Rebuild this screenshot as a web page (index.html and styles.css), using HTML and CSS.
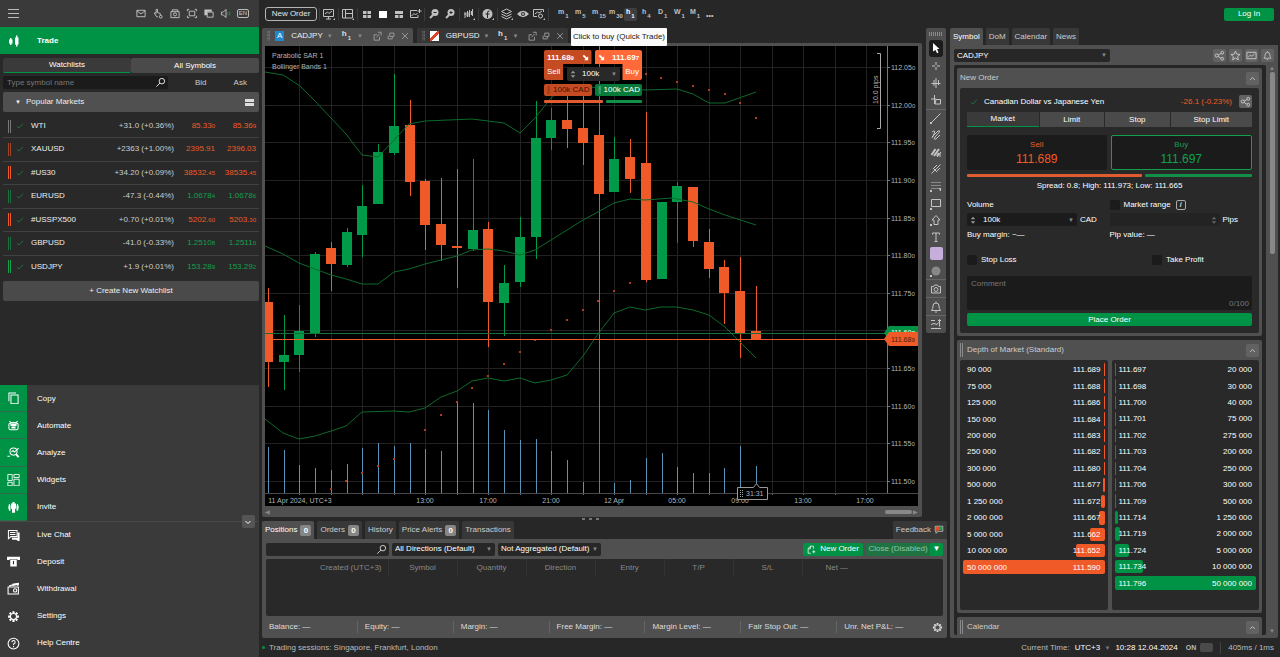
FILE: index.html
```html
<!DOCTYPE html>
<html lang="en">

<head>
    <meta charset="UTF-8">
    <meta name="viewport" content="width=device-width, initial-scale=1.0">
    <title>CADJPY - Trade</title>
    <link rel="stylesheet" href="styles.css">
</head>

<body>
    <svg class="sprite" width="0" height="0">
        <symbol id="i-mail" viewBox="0 0 12 12"><path d="M1.5 2.5h9v7h-9zM1.5 3l4.500 3.500L10.500 3" /></symbol>
        <symbol id="i-touch" viewBox="0 0 12 12"><path d="M4 6V1.500h1.500V5l3 1v2M4 5L2 5.500 4 9l2 1" /><circle cx="9" cy="9.500" r="1.500" /></symbol>
        <symbol id="i-cam" viewBox="0 0 12 12"><path d="M1.500 4h9v6.500h-9zM3 4V2h6v2" /><circle cx="6" cy="7" r="1.700" /></symbol>
        <symbol id="i-full" viewBox="0 0 12 12"><path d="M3 3.500h6v5H3zM1 3.500V1.500h2M9 1.500h2v2M11 8.500v2H9M3 10.500H1v-2" /></symbol>
        <symbol id="i-wins" viewBox="0 0 12 12"><path class="f" d="M1 1.500h8V4H4v4H1z" /><path d="M4 4.500h6.500v5.500H4z" /></symbol>
        <symbol id="i-sound" viewBox="0 0 12 12"><path d="M1 4.500h2l3-3v9l-3-3H1z" /><path class="g" d="M8 4.500v3M10 4v4" /></symbol>
        <symbol id="i-candles" viewBox="0 0 12 12"><path class="f" d="M1 4.500h1V3h1.500v1.500h1v4h-1V10H2V8.500H1zM7 2.500h1V.5h1.500v2h1v7h-1v2H8v-2H7z" /></symbol>
        <symbol id="i-search" viewBox="0 0 12 12"><circle cx="7.500" cy="4.500" r="3" /><path d="M5.500 6.500L1.500 10.500" /></symbol>
        <symbol id="i-check" viewBox="0 0 12 12"><path class="g" d="M1.500 6.500l3 2.500 6-6.500" /></symbol>
        <symbol id="i-copy" viewBox="0 0 12 12"><path d="M3.500 3h7v8.500h-7zM1.500 9V1h7" /></symbol>
        <symbol id="i-robot" viewBox="0 0 12 12"><path d="M2 2l1.500 1.500h5L10 2M1.500 5C2 3.500 10 3.500 10.500 5v4q0 1.500-1.500 1.500H3q-1.500 0-1.500-1.500z" /><path class="b" d="M3 6h6M4 8.300h4" /></symbol>
        <symbol id="i-analyze" viewBox="0 0 12 12"><circle cx="6" cy="5.500" r="3.500" /><path class="b" d="M8.500 8l2.500 3" /><path d="M0 10h2.500M4 6l1.500-1.500L7 6l4-4" /></symbol>
        <symbol id="i-widgets" viewBox="0 0 14 14"><path d="M.5.5h5v7h-5zM.5 9.500h5v4h-5zM7.500.5h6v3.500h-6zM7.500 6h6v7.500h-6z" /></symbol>
        <symbol id="i-invite" viewBox="0 0 12 12"><path class="f" d="M5 1h2v1.500h1.500v5H7.500v4h-3v-4h-1v-5H5zM1.500 3h1v1.500H3v5H1.500V8H1V4.500h.5zM9.500 3h1v1.500h.5V8h-.5v1.500H9v-5h.5z" /></symbol>
        <symbol id="i-chat" viewBox="0 0 12 12"><path d="M1 1.500h8.500v6H3.500L1 9.500zM2.500 3.500H8M2.500 5.500H8" /><path class="b" d="M11 3.500v7.500L9 9.500H4.500" /></symbol>
        <symbol id="i-deposit" viewBox="0 0 12 12"><path class="b" d="M0 2.500h12" /><path d="M.5 2v2h2M11.500 2v2h-2" /><path class="f" d="M3 4h6v6.500H3z" /><path class="k" d="M6 5.500v3" /></symbol>
        <symbol id="i-wallet" viewBox="0 0 12 12"><path d="M1 4.500h9.500V11H1zM2 3.500l8-2v2" /><path class="b" d="M5 2.500l6-1" /><circle cx="7.500" cy="7.700" r="1.500" /></symbol>
        <symbol id="i-gear" viewBox="0 0 12 12"><circle cx="6" cy="6" r="2.800" /><path class="b" d="M6 1v2M6 9v2M1 6h2M9 6h2M2.500 2.500l1.300 1.300M8.200 8.200l1.300 1.300M9.500 2.500L8.200 3.800M3.800 8.200L2.500 9.500" /></symbol>
        <symbol id="i-help" viewBox="0 0 12 12"><circle cx="6" cy="6" r="5" /><path d="M4.500 4.800q0-1.600 1.500-1.600t1.500 1.500Q7.500 5.500 6 6.500v.8M6 8.300v1" /></symbol>
        <symbol id="i-chartset" viewBox="0 0 14 14"><path d="M1.500 2.500h10v7h-10zM4 12h5M6.500 9.500V12M3 7l2.500-2L7 6.500 10 4" /><path class="f" d="M13 11v2h-2z" /></symbol>
        <symbol id="i-layout" viewBox="0 0 14 14"><path d="M1.500 2.500h10v8.500h-10zM4.500 2.500V11M4.500 6.500h7" /><path class="f" d="M13 11v2h-2z" /></symbol>
        <symbol id="i-grid" viewBox="0 0 14 14"><path class="f" d="M3 4h3.500v3H3zM7.500 4H11v3H7.500zM3 8h3.500v3H3zM7.500 8H11v3H7.500z" /></symbol>
        <symbol id="i-single" viewBox="0 0 14 14"><path class="w" d="M3 4h8v7H3z" /></symbol>
        <symbol id="i-multi" viewBox="0 0 14 14"><path class="f" d="M3 4h8v3H3zM3 8h3.500v3H3zM7.500 8H11v3H7.500z" /></symbol>
        <symbol id="i-newchart" viewBox="0 0 14 14"><path d="M9 3.500H2.500v7H10V8M3.500 9L6 6.500 7.500 8l2-2M11.500 2v4M9.500 4h4" /></symbol>
        <symbol id="i-zoomout" viewBox="0 0 14 14"><circle class="f" cx="8" cy="5.500" r="3.500" /><path class="b" d="M6 8l-3 3" /><path class="k" d="M6.500 5.500h3" /></symbol>
        <symbol id="i-zoomin" viewBox="0 0 14 14"><circle class="f" cx="8" cy="5.500" r="3.500" /><path class="b" d="M6 8l-3 3" /><path class="k" d="M6.500 5.500h3M8 4v3" /></symbol>
        <symbol id="i-ctype" viewBox="0 0 14 14"><path d="M3 5v6M2 7h2M5.500 4v6M7.500 3v7M10.500 2v7" /><path class="b" d="M5.500 5.500v4M9.800 4v4" /><path class="f" d="M13 11v2h-2z" /></symbol>
        <symbol id="i-func" viewBox="0 0 14 14"><circle class="f" cx="6.500" cy="7" r="5" /><path class="k" d="M8.500 4Q6.500 3.500 6.500 6v5M4.500 7h4" /><path class="f" d="M13 11v2h-2z" /></symbol>
        <symbol id="i-layers" viewBox="0 0 14 14"><path d="M6.500 2L11.500 4.500 6.500 7l-5-2.500zM1.500 7l5 2.500 5-2.500M1.500 9.500l5 2.500 5-2.500" /><path class="f" d="M13 11v2h-2z" /></symbol>
        <symbol id="i-eye" viewBox="0 0 14 14"><path class="f" d="M1 7q6-6.500 12 0-6 6.500-12 0z" /><circle class="kf" cx="7" cy="7" r="2" /><circle class="f" cx="7" cy="7" r="1" /></symbol>
        <symbol id="i-charteye" viewBox="0 0 14 14"><path d="M11.500 5V2.500h-10v7H5M3 7l2.500-2L7 6l3-2" /><circle cx="8.500" cy="9" r="2" /><path class="f" d="M13 11v2h-2z" /></symbol>
        <symbol id="i-cursor" viewBox="0 0 14 14"><path class="w" d="M4 2l6.500 6H8l1.500 3.500-1.500.7L6.500 9 4 10.500z" /></symbol>
        <symbol id="i-cross" viewBox="0 0 14 14"><path d="M7 3v3M7 8v3M3 7h3M8 7h3" /></symbol>
        <symbol id="i-crosschart" viewBox="0 0 14 14"><path d="M7 2v10M2.500 7.500h9M5 4v6M9.500 4v5" /></symbol>
        <symbol id="i-crossbox" viewBox="0 0 14 14"><path d="M5.500 2v9M2 6h5M7 6.500h4.500v4.500H6z" /></symbol>
        <symbol id="i-line" viewBox="0 0 14 14"><path d="M2.500 11.500l9-9" /><path class="f" d="M1 11h2v2H1z" /></symbol>
        <symbol id="i-pen" viewBox="0 0 14 14"><path d="M3 4q4-3 2 2T3 9l6-6q2-1 1.500 1L6 9q-2 3 1 2l4-4" /></symbol>
        <symbol id="i-fork" viewBox="0 0 14 14"><path class="b" d="M2.500 10l4-6M5 11l5-7M8 11l2-3" /><path d="M8 12l4-5M11 8v4" /></symbol>
        <symbol id="i-pitch" viewBox="0 0 14 14"><path d="M2.500 11.500l9-9M4 7l4-4M7 10l4-4M4.500 6.500l3 3" /></symbol>
        <symbol id="i-fib" viewBox="0 0 14 14"><path stroke-dasharray="1 1" d="M2.500 3.500h9M2.500 6.500h9M2.500 9.500h9" /><path class="f" d="M10 9h2v3h-1zM1 11h2v2H1z" /></symbol>
        <symbol id="i-rect" viewBox="0 0 14 14"><path d="M2.500 3.500h9v7h-9z" /><path class="f" d="M1 12h2v2H1z" /></symbol>
        <symbol id="i-up" viewBox="0 0 14 14"><path d="M7 2.500L11 7H9v4.500H5V7H3z" /><path class="f" d="M1 11h2v2H1z" /></symbol>
        <symbol id="i-text" viewBox="0 0 14 14"><path d="M3.500 4.500V3h7v1.500M7 3v8.500M5.500 11.500h3" /></symbol>
        <symbol id="i-dot" viewBox="0 0 14 14"><circle class="d" cx="7" cy="7" r="4.500" /><path class="d" d="M6.500 5h1v4h-1z" /><path class="f" d="M1 11h2v2H1z" /></symbol>
        <symbol id="i-camera" viewBox="0 0 14 14"><path d="M2.500 4.500h2l1-1.500h3l1 1.500h2V11h-9z" /><circle cx="7" cy="7.500" r="2" /></symbol>
        <symbol id="i-bell" viewBox="0 0 14 14"><path d="M2.500 10.500Q4 9 4 6q0-3 3-3t3 3q0 3 1.500 4.500zM6 12h2M7 1.500V3" /></symbol>
        <symbol id="i-indic" viewBox="0 0 14 14"><path d="M2 3.500h4M2 7.500l3-1 3 1 1.500-2M2 11.500h10M10.500 2.500v7M9 4l1.500-1.500L12 4" /></symbol>
        <symbol id="i-pop" viewBox="0 0 12 12"><path d="M6 4.500H2.500V11H9V7M5.500 7.500L9 3.500M7 1.500h4v4" /></symbol>
        <symbol id="i-restore" viewBox="0 0 12 12"><path d="M4.500 2.500h5v4h-5zM2.500 5.500v4h5v-3" /></symbol>
        <symbol id="i-close" viewBox="0 0 12 12"><path d="M2.500 2.500l7 7M9.500 2.500l-7 7" /></symbol>
        <symbol id="i-share" viewBox="0 0 12 12"><circle cx="3" cy="6" r="1.700" /><circle cx="9" cy="3" r="1.500" /><circle cx="9" cy="9.500" r="1.500" /><path d="M4.500 5.500L7.500 4M4.500 7l3 2" /></symbol>
        <symbol id="i-star" viewBox="0 0 12 12"><path d="M6 1.200l1.400 3.300 3.600.3-2.700 2.400.8 3.500L6 8.800l-3.100 1.900.8-3.500L1 4.800l3.600-.3z" /></symbol>
        <symbol id="i-chart" viewBox="0 0 12 12"><path d="M1 2.500h10v7H1zM2.500 7.500l2.500-2 1.500 1.500 3-3" /></symbol>
        <symbol id="i-up-chev" viewBox="0 0 12 12"><path d="M3.500 7.500L6 5l2.500 2.500" /></symbol>
        <symbol id="i-down-chev" viewBox="0 0 12 12"><path d="M3.500 5L6 7.500 8.500 5" /></symbol>
        <symbol id="i-spin" viewBox="0 0 8 12"><path class="f" d="M1 5l3-3.500L7 5zM1 7.500h6L4 11z" /></symbol>
        <symbol id="i-grip" viewBox="0 0 4 14"><path stroke-dasharray="1 1" d="M.5 0v14M2.500 0v14" /></symbol>
        <symbol id="i-order" viewBox="0 0 12 12"><path d="M4.500 1.500h4V5M1.500 5v6h3.500M1.500 5l3-3.500V5zM9 7v4M7 9h4" /></symbol>
        <symbol id="i-feedback" viewBox="0 0 12 12"><path d="M1.500 1.500h9v6H5L2.500 10V7.500h-1z" /><path class="fb-red" d="M2 2h4v5H2z" /><path class="fb-green" d="M6 2h4v4H6z" /></symbol>
        <symbol id="i-arrow" viewBox="0 0 8 8"><path class="b" d="M1.500 1.500l4 4" /><path class="f" d="M7 2.500V7H2.500z" /></symbol>
    </svg>

    <aside class="sidebar">
        <div class="sidebar-top">
            <button class="burger" aria-label="Menu"><span></span><span></span><span></span></button>
            <nav class="top-icons">
                <svg><use href="#i-mail" /></svg>
                <svg><use href="#i-touch" /></svg>
                <svg><use href="#i-cam" /></svg>
                <svg><use href="#i-full" /></svg>
                <svg><use href="#i-wins" /></svg>
                <svg><use href="#i-sound" /></svg>
                <span class="lang">EN</span>
            </nav>
        </div>
        <a class="trade" href="#"><svg><use href="#i-candles" /></svg>Trade</a>

        <section class="watch">
            <div class="watch-tabs">
                <button class="active">Watchlists</button>
                <button>All Symbols</button>
            </div>
            <div class="watch-search">
                <div class="search">
                    <input type="text" placeholder="Type symbol name" aria-label="Symbol name">
                    <svg><use href="#i-search" /></svg>
                </div>
                <span>Bid</span>
                <span>Ask</span>
            </div>
            <button class="group"><i>▼</i>Popular Markets<b class="group-icon"></b></button>
            <table class="quotes">
                <tr><td class="mark grey"></td><td class="tick"><svg><use href="#i-check" /></svg></td><td>WTI</td><td class="chg">+31.0 (+0.36%)</td><td class="red">85.33<small>0</small></td><td class="red">85.36<small>9</small></td></tr>
                <tr><td class="mark red dim"></td><td class="tick"><svg><use href="#i-check" /></svg></td><td>XAUUSD</td><td class="chg">+2363 (+1.00%)</td><td class="red">2395.91</td><td class="red">2396.03</td></tr>
                <tr><td class="mark red"></td><td class="tick"><svg><use href="#i-check" /></svg></td><td>#US30</td><td class="chg">+34.20 (+0.09%)</td><td class="red">38532.<small>45</small></td><td class="red">38535.<small>45</small></td></tr>
                <tr><td class="mark green dim"></td><td class="tick"><svg><use href="#i-check" /></svg></td><td>EURUSD</td><td class="chg">-47.3 (-0.44%)</td><td class="green">1.0678<small>4</small></td><td class="green">1.0678<small>6</small></td></tr>
                <tr><td class="mark red"></td><td class="tick"><svg><use href="#i-check" /></svg></td><td>#USSPX500</td><td class="chg">+0.70 (+0.01%)</td><td class="red">5202.<small>60</small></td><td class="red">5203.<small>30</small></td></tr>
                <tr><td class="mark green dim"></td><td class="tick"><svg><use href="#i-check" /></svg></td><td>GBPUSD</td><td class="chg">-41.0 (-0.33%)</td><td class="green">1.2510<small>8</small></td><td class="green">1.2511<small>0</small></td></tr>
                <tr><td class="mark green"></td><td class="tick"><svg><use href="#i-check" /></svg></td><td>USDJPY</td><td class="chg">+1.9 (+0.01%)</td><td class="green">153.28<small>9</small></td><td class="green">153.29<small>2</small></td></tr>
            </table>
            <button class="create">+ Create New Watchlist</button>
        </section>

        <nav class="menu">
            <a class="on" href="#"><svg><use href="#i-copy" /></svg>Copy</a>
            <a class="on" href="#"><svg><use href="#i-robot" /></svg>Automate</a>
            <a class="on" href="#"><svg><use href="#i-analyze" /></svg>Analyze</a>
            <a class="on" href="#"><svg><use href="#i-widgets" /></svg>Widgets</a>
            <a class="on" href="#"><svg><use href="#i-invite" /></svg>Invite</a>
            <a class="first" href="#"><svg><use href="#i-chat" /></svg>Live Chat</a>
            <a href="#"><svg><use href="#i-deposit" /></svg>Deposit</a>
            <a href="#"><svg><use href="#i-wallet" /></svg>Withdrawal</a>
            <a href="#"><svg><use href="#i-gear" /></svg>Settings</a>
            <a href="#"><svg><use href="#i-help" /></svg>Help Centre</a>
            <button class="fold" aria-label="Collapse"><svg><use href="#i-down-chev" /></svg></button>
        </nav>
    </aside>

    <div class="workspace">
        <header class="toolbar">
            <button class="new-order">New Order</button>
            <i class="sep"></i>
            <button class="tool" aria-label="Chart"><svg><use href="#i-chartset" /></svg></button>
            <i class="sep"></i>
            <button class="tool" aria-label="Layout"><svg><use href="#i-layout" /></svg></button>
            <i class="sep"></i>
            <button class="tool" aria-label="Grid"><svg><use href="#i-grid" /></svg></button>
            <button class="tool" aria-label="Single"><svg><use href="#i-single" /></svg></button>
            <button class="tool" aria-label="Multi"><svg><use href="#i-multi" /></svg></button>
            <button class="tool" aria-label="New chart"><svg><use href="#i-newchart" /></svg></button>
            <i class="sep"></i>
            <button class="tool" aria-label="Zoom out"><svg><use href="#i-zoomout" /></svg></button>
            <button class="tool" aria-label="Zoom in"><svg><use href="#i-zoomin" /></svg></button>
            <i class="sep"></i>
            <button class="tool" aria-label="Chart type"><svg><use href="#i-ctype" /></svg></button>
            <i class="sep"></i>
            <button class="tool" aria-label="Indicators"><svg><use href="#i-func" /></svg></button>
            <i class="sep"></i>
            <button class="tool" aria-label="Objects"><svg><use href="#i-layers" /></svg></button>
            <button class="tool" aria-label="View"><svg><use href="#i-eye" /></svg></button>
            <button class="tool" aria-label="Chart view"><svg><use href="#i-charteye" /></svg></button>
            <i class="sep"></i>
            <div class="frames">
                <button>m<sub>1</sub></button>
                <button>m<sub>5</sub></button>
                <button>m<sub>15</sub></button>
                <button>m<sub>30</sub></button>
                <button class="active">h<sub>1</sub></button>
                <button>h<sub>4</sub></button>
                <button>D<sub>1</sub></button>
                <button>W<sub>1</sub></button>
                <button>M<sub>1</sub></button>
                <button class="more">•••</button>
            </div>
            <button class="login">Log In</button>
        </header>

        <div class="main">
            <main class="center">
                <div class="charts">
                    <div class="chart-col">
                        <div class="chart-tabs">
                            <div class="chart-tab active">
                                <svg class="bar-grip"><use href="#i-grip" /></svg>
                                <span class="badge blue">A</span>
                                <span class="name">CADJPY</span><i>▼</i>
                                <span class="tf">h<sub>1</sub></span><i>▼</i>
                                <svg><use href="#i-pop" /></svg>
                                <svg class="end"><use href="#i-restore" /></svg>
                                <svg><use href="#i-close" /></svg>
                            </div>
                            <div class="chart-tab">
                                <svg class="bar-grip"><use href="#i-grip" /></svg>
                                <span class="badge slash"></span>
                                <span class="name">GBPUSD</span><i>▼</i>
                                <span class="tf">h<sub>1</sub></span><i>▼</i>
                                <svg><use href="#i-pop" /></svg>
                                <svg class="end"><use href="#i-restore" /></svg>
                                <svg><use href="#i-close" /></svg>
                            </div>
                            <div class="tooltip">Click to buy (Quick Trade)</div>
                        </div>
                        <div class="chart">
                            <svg id="plot"></svg>
                            <div class="quick">
                                <div class="quick-row">
                                    <button class="q-sell"><b><em>111.68<small>9</small></em><svg><use href="#i-arrow" /></svg></b><span>Sell</span></button>
                                    <button class="q-buy"><b><svg><use href="#i-arrow" /></svg><em>111.69<small>7</small></em></b><span>Buy</span></button>
                                    <div class="q-vol"><svg><use href="#i-spin" /></svg><input type="text" value="100k" aria-label="Volume"><i>▼</i></div>
                                </div>
                                <div class="quick-row low">
                                    <span class="chip sell"><svg><use href="#i-grip" /></svg>100k CAD</span>
                                    <span class="chip buy"><svg><use href="#i-grip" /></svg>100k CAD</span>
                                </div>
                                <div class="ratio"><i></i><i></i></div>
                            </div>
                            <div class="chart-scroll"><i>◀</i><b></b><i>▶</i></div>
                        </div>
                    </div>
                    <div class="draw">
                        <b class="draw-grip"></b>
                        <button class="active" aria-label="Cursor"><svg><use href="#i-cursor" /></svg></button>
                        <button aria-label="Crosshair"><svg><use href="#i-cross" /></svg></button>
                        <button aria-label="Marker"><svg><use href="#i-crosschart" /></svg></button>
                        <button aria-label="Measure"><svg><use href="#i-crossbox" /></svg></button>
                        <button class="line" aria-label="Line"><svg><use href="#i-line" /></svg></button>
                        <button aria-label="Pencil"><svg><use href="#i-pen" /></svg></button>
                        <button aria-label="Channel"><svg><use href="#i-fork" /></svg></button>
                        <button aria-label="Pitchfork"><svg><use href="#i-pitch" /></svg></button>
                        <button aria-label="Fibonacci"><svg><use href="#i-fib" /></svg></button>
                        <button aria-label="Shape"><svg><use href="#i-rect" /></svg></button>
                        <button aria-label="Arrow"><svg><use href="#i-up" /></svg></button>
                        <button aria-label="Text"><svg><use href="#i-text" /></svg></button>
                        <button aria-label="Colour"><span class="swatch"></span></button>
                        <button aria-label="Opacity"><svg><use href="#i-dot" /></svg></button>
                        <button class="line" aria-label="Snapshot"><svg><use href="#i-camera" /></svg></button>
                        <button class="line" aria-label="Alert"><svg><use href="#i-bell" /></svg></button>
                        <button class="line" aria-label="Indicator list"><svg><use href="#i-indic" /></svg></button>
                    </div>
                </div>

                <div class="splitter"><i></i><i></i><i></i></div>

                <div class="tabs bottom-tabs">
                    <button class="active">Positions <b>0</b></button>
                    <button>Orders <b>0</b></button>
                    <button>History</button>
                    <button>Price Alerts <b>0</b></button>
                    <button>Transactions</button>
                    <button class="feedback">Feedback <svg><use href="#i-feedback" /></svg></button>
                </div>
                <section class="positions">
                    <div class="filters">
                        <div class="search">
                            <input type="text" aria-label="Search positions">
                            <svg><use href="#i-search" /></svg>
                        </div>
                        <div class="select"><select aria-label="Direction"><option>All Directions (Default)</option></select></div>
                        <div class="select"><select aria-label="Aggregation"><option>Not Aggregated (Default)</option></select></div>
                        <button class="btn add"><svg><use href="#i-order" /></svg>New Order</button>
                        <div class="close-group"><button disabled>Close (Disabled)</button><button class="drop" aria-label="More">▼</button></div>
                    </div>
                    <div class="table-wrap">
                        <table class="positions-table">
                            <tr>
                                <th class="created">Created (UTC+3)</th>
                                <th>Symbol</th>
                                <th>Quantity</th>
                                <th>Direction</th>
                                <th>Entry</th>
                                <th>T/P</th>
                                <th>S/L</th>
                                <th class="net">Net —</th>
                                <th class="rest"></th>
                            </tr>
                        </table>
                    </div>
                    <div class="totals">
                        <span>Balance: —</span>
                        <span>Equity: —</span>
                        <span>Margin: —</span>
                        <span>Free Margin: —</span>
                        <span>Margin Level: —</span>
                        <span>Fair Stop Out: —</span>
                        <span>Unr. Net P&amp;L: —</span>
                        <svg><use href="#i-gear" /></svg>
                    </div>
                </section>
            </main>

            <aside class="side">
                <div class="tabs">
                    <button class="active">Symbol</button>
                    <button>DoM</button>
                    <button>Calendar</button>
                    <button>News</button>
                </div>
                <div class="side-panel">
                    <div class="symbol-row">
                        <div class="select"><select aria-label="Symbol"><option>CADJPY</option></select></div>
                        <button class="sq" aria-label="Share"><svg><use href="#i-share" /></svg></button>
                        <button class="sq" aria-label="Favourite"><svg><use href="#i-star" /></svg></button>
                        <button class="sq" aria-label="Open chart"><svg><use href="#i-chart" /></svg></button>
                        <button class="sq" aria-label="Alert"><svg><use href="#i-bell" /></svg></button>
                    </div>
                    <div class="scroll-area">
                        <div class="cards">
                            <section class="card">
                                <h2>New Order<button class="sq" aria-label="Collapse"><svg><use href="#i-up-chev" /></svg></button></h2>
                                <form class="order">
                                    <div class="order-title">
                                        <svg><use href="#i-check" /></svg>
                                        <strong>Canadian Dollar vs Japanese Yen</strong>
                                        <span class="red">-26.1 (-0.23%)</span>
                                        <button type="button" class="sq" aria-label="Share"><svg><use href="#i-share" /></svg></button>
                                    </div>
                                    <div class="order-tabs">
                                        <button type="button" class="active">Market</button>
                                        <button type="button">Limit</button>
                                        <button type="button">Stop</button>
                                        <button type="button">Stop Limit</button>
                                    </div>
                                    <div class="prices">
                                        <button type="button" class="red">Sell<b>111.689</b></button>
                                        <button type="button" class="green">Buy<b>111.697</b></button>
                                    </div>
                                    <div class="ratio"><i></i><i></i></div>
                                    <p class="spread">Spread: 0.8; High: 111.973; Low: 111.665</p>
                                    <div class="fields">
                                        <div>
                                            <label class="cap" for="volume">Volume</label>
                                            <div class="field"><span class="num"><svg><use href="#i-spin" /></svg><input id="volume" type="text" value="100k"><i>▼</i></span>CAD</div>
                                            <p>Buy margin: ~—</p>
                                        </div>
                                        <div>
                                            <label class="cap"><input type="checkbox">Market range <em>i</em></label>
                                            <div class="field"><span class="num off"><input type="text" aria-label="Range in pips" disabled><svg><use href="#i-spin" /></svg></span>Pips</div>
                                            <p>Pip value: —</p>
                                        </div>
                                    </div>
                                    <div class="protect">
                                        <label><input type="checkbox">Stop Loss</label>
                                        <label><input type="checkbox">Take Profit</label>
                                    </div>
                                    <div class="comment">
                                        <textarea placeholder="Comment" aria-label="Comment"></textarea>
                                        <span>0/100</span>
                                    </div>
                                    <button type="button" class="btn place">Place Order</button>
                                </form>
                            </section>

                            <section class="card">
                                <h2><b class="dots"></b>Depth of Market (Standard)<button class="sq" aria-label="Collapse"><svg><use href="#i-up-chev" /></svg></button></h2>
                                <div class="dom">
                                    <div><table id="bids"></table></div>
                                    <div><table id="asks"></table></div>
                                </div>
                            </section>

                            <section class="card">
                                <h2><b class="dots"></b>Calendar<button class="sq" aria-label="Collapse"><svg><use href="#i-up-chev" /></svg></button></h2>
                            </section>
                        </div>
                        <div class="scrollbar"><i>▲</i><b></b><i>▼</i></div>
                    </div>
                </div>
            </aside>
        </div>

        <footer class="status">
            <b class="live"></b>
            <span>Trading sessions: Singapore, Frankfurt, London</span>
            <span class="time">Current Time:</span>
            <span class="lit">UTC+3 <i>▼</i></span>
            <span class="lit">10:28 12.04.2024</span>
            <strong>ON</strong>
            <b class="toggle"></b>
            <span class="ping">405ms / 1ms</span>
        </footer>
    </div>

    <script src="script.js"></script>
</body>

</html>
```

FILE: styles.css
```css
* {
    box-sizing: border-box;
}

body {
    display: flex;
    height: 100vh;
    margin: 0;
    overflow: hidden;
    background: #272727;
    color: #d8d8d8;
    font: 8px/12px "Liberation Sans", Arial, sans-serif;
}

button,
input,
select,
textarea {
    margin: 0;
    padding: 0;
    border: 0;
    background: none;
    color: inherit;
    font: inherit;
    outline: none;
}

a {
    color: inherit;
    text-decoration: none;
}

i,
em {
    font-style: normal;
}

p,
h2 {
    margin: 0;
    font-size: 8px;
    font-weight: normal;
}

table {
    border-collapse: collapse;
}

svg {
    width: 12px;
    height: 12px;
    flex: none;
    display: block;
    fill: none;
    stroke: currentColor;
}

.sprite {
    position: absolute;
    width: 0;
    height: 0;
}

.f { fill: currentColor; stroke: none; }
.w { fill: #fff; stroke: none; }
.b { stroke-width: 2; }
.g { stroke: #159447; }
.k { stroke: #272727; }
.kf { fill: #272727; stroke: none; }
.d { fill: #888; stroke: none; }
.fb-red { fill: #e0522d; stroke: none; }
.fb-green { fill: #1b9e4b; stroke: none; }

.red { color: #f05a28; }
.green { color: #12a04d; }

/* left sidebar */
.sidebar {
    width: 259px;
    flex: none;
    display: flex;
    flex-direction: column;
    background: #292929;
}

.sidebar-top {
    height: 27px;
    flex: none;
    display: flex;
    align-items: center;
    justify-content: space-between;
    padding: 0 10px 0 8px;
    background: #3a3a3a;
}

.burger {
    width: 11px;
    display: flex;
    flex-direction: column;
    gap: 3px;
}

.burger span {
    height: 1px;
    background: #bbb;
}

.top-icons {
    display: flex;
    align-items: center;
    gap: 5px;
    color: #c4c4c4;
}

.top-icons svg {
    height: 11px;
}

.lang {
    border: 1px solid #bbb;
    border-radius: 2px;
    padding: 0 1px;
    font-size: 6px;
    line-height: 7px;
}

.trade {
    height: 27px;
    flex: none;
    display: flex;
    align-items: center;
    gap: 17px;
    padding-left: 8px;
    background: #009345;
    color: #fff;
    font-weight: bold;
}

.watch {
    flex: 1;
    min-height: 0;
    padding: 4px 0 0 3px;
    color: #eee;
}

.watch-tabs {
    display: flex;
    height: 15px;
}

.watch-tabs button {
    flex: 1;
    background: #4a4a4a;
    border-radius: 2px;
    color: #fff;
}

.watch-tabs .active {
    background: #3a3a3a;
    border-bottom: 1px solid #009345;
}

.watch-search {
    display: flex;
    align-items: center;
    height: 19px;
    gap: 27px;
}

.watch-search .search {
    width: 165px;
}

.watch-search span {
    color: #ccc;
}

.search {
    display: flex;
    align-items: center;
    height: 13px;
    padding: 0 2px 0 4px;
    background: #1b1b1b;
    border-radius: 2px;
}

.search input {
    flex: 1;
    min-width: 0;
}

.search svg {
    width: 11px;
    height: 11px;
}

::placeholder {
    color: #777;
    opacity: 1;
}

.group {
    width: 100%;
    height: 20px;
    display: flex;
    align-items: center;
    gap: 5px;
    padding: 0 5px 0 12px;
    background: #505050;
    border-radius: 2px;
}

.group i {
    font-size: 6px;
}

.group-icon {
    width: 9px;
    height: 7px;
    margin-left: auto;
    border: solid #ddd;
    border-width: 3px 0;
}

.quotes {
    width: 100%;
    height: 163px;
    margin: 3px 0 2px;
}

.quotes tr + tr {
    border-top: 1px solid #414141;
}

.quotes td {
    padding: 0;
    white-space: nowrap;
}

.quotes .mark {
    width: 10px;
    padding: 0 2px 0 5px;
}

.mark::before {
    content: "";
    display: block;
    height: 13px;
    background: repeating-linear-gradient(90deg, currentColor 0 1px, transparent 1px 2px);
}

.mark.dim::before {
    opacity: 0.6;
}

.mark.grey {
    color: #777;
}

.quotes .tick {
    width: 18px;
    padding-left: 3px;
}

.quotes .tick svg {
    width: 8px;
    height: 8px;
}

.quotes .chg {
    width: 70px;
    text-align: right;
    color: #ccc;
}

.quotes .chg ~ td {
    width: 41px;
    text-align: right;
}

.quotes .chg ~ td:last-child {
    width: 44px;
    padding-right: 3px;
}

small {
    font-size: 6px;
}

.create {
    width: 100%;
    height: 20px;
    margin-top: 1px;
    background: #4a4a4a;
    border-radius: 2px;
}

.menu {
    position: relative;
    height: 272px;
    flex: none;
    display: grid;
    grid-template-rows: repeat(10, 1fr);
    background: #3a3a3a;
    color: #fff;
}

.menu a {
    display: flex;
    align-items: center;
    gap: 10px;
    min-height: 0;
}

.menu a svg {
    width: 27px;
    height: auto;
    align-self: stretch;
    padding: 7px;
}

.menu .on svg {
    background: #009345;
    border-bottom: 1px solid #2f6b48;
}

.menu .first {
    border-top: 1px solid #484848;
}

.fold {
    position: absolute;
    right: 4px;
    top: 130px;
    width: 13px;
    height: 13px;
    background: #555;
    border-radius: 2px;
}

/* top toolbar */
.workspace {
    flex: 1;
    min-width: 0;
    display: flex;
    flex-direction: column;
    padding: 0 2px 0 3px;
}

.toolbar {
    height: 28px;
    flex: none;
    display: flex;
    align-items: center;
    gap: 2px;
    padding: 0 4px 0 3px;
    color: #c0c0c0;
}

.new-order {
    height: 14px;
    width: 52px;
    border: 1px solid #b5b5b5;
    border-radius: 3px;
    color: #e5e5e5;
}

.tool svg {
    width: 14px;
    height: 14px;
}

.sep {
    width: 1px;
    height: 13px;
    background: #3c3c3c;
}

.frames {
    display: flex;
    margin-left: 5px;
    font-size: 7px;
    font-weight: bold;
}

.frames button {
    width: 17px;
    height: 13px;
    line-height: 8px;
    text-align: left;
    padding: 0 0 3px 2px;
    white-space: nowrap;
}

.frames button:nth-child(n + 6) {
    width: 16px;
}

.frames .active {
    width: 13px;
    margin-right: 3px;
    background: #3f3f3f;
    border-radius: 2px;
    color: #fff;
}

.frames .more {
    padding-top: 4px;
}

sub {
    margin-left: 1px;
    font-size: 6px;
    line-height: 1px;
    vertical-align: -4px;
}

.login {
    width: 50px;
    height: 13px;
    margin-left: auto;
    background: #009345;
    border-radius: 2px;
    color: #fff;
}

/* chart area */
.main {
    flex: 1;
    min-height: 0;
    display: flex;
    gap: 3px;
}

.center {
    flex: 1;
    min-width: 0;
    display: flex;
    flex-direction: column;
}

.charts {
    flex: 1;
    min-height: 0;
    display: flex;
    gap: 4px;
}

.chart-col {
    flex: 1;
    min-width: 0;
    display: flex;
    flex-direction: column;
}

.chart-tabs {
    position: relative;
    display: flex;
    gap: 4px;
    height: 15px;
    flex: none;
}

.chart-tab {
    width: 151px;
    display: flex;
    align-items: center;
    gap: 4px;
    padding: 0 3px 0 5px;
    background: #363636;
    border-radius: 2px 2px 0 0;
    color: #a5a5a5;
}

.chart-tab.active {
    background: #4e4e4e;
}

.chart-tab svg {
    width: 10px;
    height: 10px;
}

.chart-tab .bar-grip {
    width: 4px;
}

.chart-tab i {
    width: 12px;
    font-size: 6px;
    color: #888;
}

.chart-tab .name {
    width: 34px;
    color: #eee;
    margin-left: 3px;
}

.chart-tab .tf {
    width: 12px;
    line-height: 8px;
    padding-bottom: 2px;
    font-weight: bold;
    color: #ddd;
}

.chart-tab .end {
    margin-left: auto;
}

.badge {
    width: 10px;
    height: 10px;
    line-height: 10px;
    text-align: center;
    color: #fff;
}

.badge.blue {
    background: #1e88cf;
}

.badge.slash {
    background: linear-gradient(135deg, #fff 42%, #d8432a 42% 58%, #fff 58%);
}

.tooltip {
    position: absolute;
    left: 309px;
    top: 0;
    z-index: 3;
    height: 18px;
    padding: 0 2px;
    line-height: 18px;
    white-space: nowrap;
    background: #fafafa;
    color: #222;
    border-radius: 1px;
}

.chart {
    position: relative;
    flex: 1;
    min-height: 0;
    display: flex;
    flex-direction: column;
    padding: 3px 4px 0 3px;
    background: #505050;
    border-radius: 0 2px 2px 2px;
}

#plot {
    width: 100%;
    flex: 1;
    min-height: 0;
    background: #000;
    stroke: none;
    font-size: 7px;
}

#plot text {
    fill: #b5b5b5;
}

.chart-scroll {
    height: 11px;
    flex: none;
    display: flex;
    align-items: center;
    gap: 1px;
    font-size: 6px;
    color: #888;
}

.chart-scroll b {
    width: 27px;
    height: 4px;
    margin-left: auto;
    border-radius: 2px;
    background: #888;
}

.quick {
    position: absolute;
    left: 282px;
    top: 7px;
    width: 98px;
    color: #fff;
}

.quick-row {
    position: relative;
    display: flex;
    gap: 3px;
}

.quick-row > button {
    flex: 1;
    height: 30px;
    padding: 1px 3px;
    border-radius: 2px;
    text-align: left;
}

.quick-row b,
.quick-row button span {
    display: flex;
    justify-content: space-between;
    align-items: center;
    height: 13px;
}

.quick-row button span {
    height: 16px;
}

.quick-row b svg {
    width: 7px;
    height: 7px;
}

.q-sell {
    background: #c44b22;
    clip-path: polygon(0 0, 100% 0, 100% 14px, 19px 14px, 19px 100%, 0 100%);
}

.q-buy {
    background: #ff6a38;
    clip-path: polygon(0 0, 100% 0, 100% 100%, 28px 100%, 28px 14px, 0 14px);
}

.quick-row .q-buy span {
    justify-content: flex-end;
}

.q-vol {
    position: absolute;
    left: 23px;
    top: 17px;
    width: 53px;
    height: 14px;
    display: flex;
    align-items: center;
    padding: 0 3px;
    background: #292929;
    border-radius: 2px;
}

.q-vol input {
    flex: 1;
    min-width: 0;
    padding-left: 6px;
}

.q-vol i,
.num i {
    font-size: 6px;
    color: #888;
}

.q-vol svg,
.num svg {
    width: 6px;
    height: 10px;
    color: #999;
}

.low {
    margin-top: 4px;
}

.chip {
    flex: 1;
    height: 12px;
    display: flex;
    align-items: center;
    gap: 2px;
    padding-left: 3px;
    border-radius: 2px;
    white-space: nowrap;
}

.chip svg {
    width: 4px;
    height: 8px;
}

.chip.sell {
    background: #c44b22;
    color: #3d1608;
}

.chip.buy {
    background: #077b3a;
}

.ratio {
    display: flex;
    gap: 3px;
    margin-top: 4px;
}

.ratio i {
    flex: 38;
    height: 3px;
    border-radius: 1px;
    background: #119048;
}

.ratio i:first-child {
    flex: 62;
    background: #e05c30;
}

/* drawing tools */
.draw {
    width: 20px;
    margin-right: 1px;
    height: 305px;
    flex: none;
    display: flex;
    flex-direction: column;
    background: #4e4e4e;
    border-radius: 2px;
    color: #c4c4c4;
}

.draw-grip,
.dots {
    display: block;
    background: repeating-linear-gradient(90deg, #8a8a8a 0 1px, transparent 1px 2px);
}

.draw-grip {
    height: 4px;
    margin: 4px 3px 3px;
}

.draw button {
    flex: 1;
    display: flex;
    align-items: center;
    justify-content: center;
}

.draw .line {
    border-top: 1px solid #666;
}

.draw .active {
    background: #1c1c1c;
    border-radius: 3px;
    margin: 1px 3px;
}

.draw svg {
    width: 14px;
    height: 14px;
}

.swatch {
    width: 13px;
    height: 13px;
    background: #c5aedb;
    border-radius: 2px;
}

.splitter {
    height: 4px;
    flex: none;
    display: flex;
    justify-content: center;
    gap: 4px;
    padding: 1px 28px 0 0;
}

.splitter i {
    width: 3px;
    height: 2px;
    background: #777;
}

/* tab strips */
.tabs {
    display: flex;
    gap: 3px;
    height: 17px;
    flex: none;
}

.tabs button {
    display: flex;
    align-items: center;
    gap: 3px;
    padding: 0 3px;
    background: #383838;
    border-radius: 2px 2px 0 0;
    color: #ccc;
}

.tabs .active {
    background: #505050;
    color: #fff;
}

.tabs b {
    width: 11px;
    height: 11px;
    line-height: 11px;
    background: #868686;
    border-radius: 2px;
    color: #fff;
}

.bottom-tabs {
    height: 18px;
}

.bottom-tabs .feedback {
    margin-left: auto;
}

.bottom-tabs svg {
    width: 10px;
    height: 10px;
}

.positions {
    height: 99px;
    flex: none;
    padding: 0 4px;
    display: flex;
    flex-direction: column;
    background: #505050;
    border-radius: 0 0 2px 2px;
}

.filters {
    height: 20px;
    display: flex;
    align-items: center;
    gap: 3px;
}

.filters .search {
    width: 123px;
    background: #272727;
}

.select {
    position: relative;
    width: 103px;
    height: 13px;
    background: #272727;
    border-radius: 2px;
    color: #fff;
}

.select select {
    width: 100%;
    height: 13px;
    padding: 0 3px;
    appearance: none;
}

.select::after {
    content: "▼";
    position: absolute;
    right: 3px;
    top: 0;
    font-size: 6px;
    color: #888;
    pointer-events: none;
}

.btn {
    display: flex;
    align-items: center;
    justify-content: center;
    height: 13px;
    background: #009345;
    border-radius: 2px;
    color: #fff;
}

.add {
    width: 60px;
    gap: 4px;
    margin-left: auto;
}

.add svg {
    width: 9px;
    height: 9px;
}

.close-group {
    display: flex;
    height: 13px;
    border-radius: 2px;
    overflow: hidden;
    background: #1f7343;
    color: #8fc4a3;
}

.close-group button {
    width: 64px;
}

.close-group .drop {
    width: 13px;
    background: #009345;
    color: #fff;
}

.table-wrap {
    flex: 1;
    background: #292929;
    border-radius: 2px;
}

.positions-table {
    width: 100%;
    table-layout: fixed;
}

.positions-table th {
    width: 69px;
    height: 18px;
    padding: 0;
    font-weight: normal;
    color: #888;
    border-right: 1px solid #333;
}

.positions-table .created {
    width: 122px;
    padding-right: 6px;
    text-align: right;
}

.positions-table .net {
    border: 0;
}

.positions-table .rest {
    width: auto;
    border: 0;
}

.totals {
    height: 22px;
    display: flex;
    align-items: center;
    color: #ddd;
}

.totals span {
    flex: 1;
    padding-left: 3px;
}

.totals span + span {
    border-left: 1px solid #666;
    padding-left: 7px;
}

.totals svg {
    width: 11px;
    height: 11px;
}

/* right panel */
.side {
    width: 328px;
    flex: none;
    display: flex;
    flex-direction: column;
}

.side-panel {
    flex: 1;
    min-height: 0;
    display: flex;
    flex-direction: column;
    padding: 4px 3px 3px 4px;
    background: #505050;
    border-radius: 0 0 2px 2px;
}

.symbol-row {
    height: 13px;
    flex: none;
    display: flex;
    gap: 3px;
    padding-right: 1px;
}

.symbol-row .select {
    width: 156px;
    margin-right: auto;
}

.sq {
    width: 13px;
    height: 13px;
    display: flex;
    align-items: center;
    justify-content: center;
    background: #626262;
    border-radius: 2px;
    color: #ccc;
}

.sq svg {
    width: 11px;
    height: 11px;
}

.scroll-area {
    flex: 1;
    min-height: 0;
    display: flex;
    gap: 3px;
    margin-top: 3px;
}

.cards {
    flex: 1;
    padding: 3px 4px 0 3px;
    overflow: hidden;
    background: #252525;
    border-radius: 2px;
}

.card {
    margin-bottom: 4px;
    padding: 0 3px 3px;
    background: #505050;
    border-radius: 2px;
}

.card h2 {
    display: flex;
    align-items: center;
    height: 20px;
    color: #ccc;
}

.card h2 .sq {
    margin-left: auto;
}

.dots {
    width: 4px;
    height: 14px;
    margin-right: 3px;
}

.scrollbar {
    width: 6px;
    display: flex;
    flex-direction: column;
    align-items: center;
    font-size: 6px;
    line-height: 7px;
    color: #888;
}

.scrollbar b {
    width: 5px;
    height: 182px;
    margin-bottom: auto;
    border-radius: 2px;
    background: #888;
}

.order {
    padding: 7px;
    background: #292929;
    border-radius: 2px;
    color: #fff;
}

.order-title {
    display: flex;
    align-items: center;
    height: 13px;
}

.order-title > svg {
    width: 8px;
    height: 8px;
    margin: 0 6px 0 3px;
}

.order-title strong {
    font-weight: normal;
}

.order-title .red {
    margin: 0 7px 0 auto;
}

.order-tabs {
    display: flex;
    gap: 1px;
    height: 15px;
    margin-top: 4px;
}

.order-tabs button {
    flex: 65;
    background: #4a4a4a;
    color: #fff;
}

.order-tabs button:last-child {
    flex: 82;
}

.order-tabs .active {
    flex: 72;
    background: #3a3a3a;
    border-bottom: 1px solid #009345;
}

.prices {
    display: flex;
    gap: 4px;
    margin-top: 8px;
}

.prices button {
    flex: 1;
    height: 35px;
    background: #1b1b1b;
    border-radius: 2px;
}

.prices .green {
    border: 1px solid #12a04d;
}

.prices b {
    display: block;
    font-size: 12px;
    font-weight: normal;
    line-height: 16px;
}

.spread {
    margin-top: 3px;
    text-align: center;
}

.fields {
    display: grid;
    grid-template-columns: 1fr 1fr;
    margin-top: 7px;
}

.cap,
.protect label {
    display: flex;
    align-items: center;
    height: 12px;
}

.cap em {
    width: 10px;
    height: 10px;
    margin-left: 5px;
    border: 1px solid #aaa;
    border-radius: 2px;
    line-height: 8px;
    text-align: center;
    font-style: italic;
}

input[type="checkbox"] {
    width: 10px;
    height: 10px;
    margin-right: 4px;
    appearance: none;
    background: #1b1b1b;
    border-radius: 2px;
}

.field {
    display: flex;
    align-items: center;
    gap: 3px;
    margin: 2px 0 3px;
}

.num {
    width: 110px;
    height: 13px;
    display: flex;
    align-items: center;
    padding: 0 3px;
    background: #1b1b1b;
    border-radius: 2px;
}

.num input {
    flex: 1;
    min-width: 0;
    padding-left: 7px;
}

.num.off {
    background: #232323;
}

.num.off svg {
    color: #666;
}

.protect {
    display: grid;
    grid-template-columns: 185px 1fr;
    margin: 13px 0 10px;
}

.comment {
    position: relative;
}

.comment textarea {
    display: block;
    width: 100%;
    height: 34px;
    padding: 2px 4px;
    resize: none;
    background: #1b1b1b;
    border-radius: 2px;
}

.comment span {
    position: absolute;
    right: 3px;
    bottom: 0;
    color: #777;
}

.place {
    width: 100%;
    margin-top: 3px;
}

.dom {
    display: flex;
    gap: 4px;
}

.dom div {
    flex: 1;
    height: 250px;
    padding: 2px 3px;
    background: #292929;
    border-radius: 2px;
    color: #fff;
}

.dom table {
    width: 100%;
    height: 230px;
}

.dom #bids {
    height: 214px;
}

.dom tr {
    position: relative;
}

.dom td {
    position: relative;
    padding: 0 4px;
}

.dom td:last-child {
    text-align: right;
}

.dom .bar {
    position: absolute;
    top: 1px;
    bottom: 2px;
    left: 0;
    min-width: 1px;
    padding: 0;
    border-radius: 2px;
    background: #009345;
}

.dom #bids .bar {
    left: auto;
    right: 0;
    background: #f05a28;
}

/* status bar */
.status {
    height: 19px;
    flex: none;
    display: flex;
    align-items: center;
    padding-right: 4px;
    color: #bbb;
}

.live {
    width: 3px;
    height: 3px;
    margin-right: 4px;
    border-radius: 50%;
    background: #009345;
}

.time {
    margin-left: auto;
}

.lit {
    margin-left: 5px;
    color: #fff;
}

.lit i {
    margin-left: 2px;
    font-size: 6px;
    color: #777;
}

.status strong {
    margin: 0 4px 0 8px;
    font-size: 7px;
}

.toggle {
    width: 13px;
    height: 9px;
    background: #4a4a4a;
    border-radius: 2px;
}

.ping {
    margin-left: 7px;
    padding-left: 7px;
    border-left: 1px solid #444;
}
```

FILE: script.js
```js
const NS = 'http://www.w3.org/2000/svg';
const plot = document.getElementById('plot');

const UP = '#009a48';
const DOWN = '#f05a28';
const STEP = 15.74;
const PLOT_RIGHT = 622;
const PLOT_BOTTOM = 447;

// [wick top, body top, body bottom, wick bottom, colour, volume top]
const candles = [
    [242, 256, 316, 341, DOWN, 401], [269, 309, 316, 344, UP, 404], [259, 285, 309, 326, UP, 419],
    [206, 208, 287, 291, UP, 422], [196, 202, 218, 245, DOWN, 424], [182, 186, 219, 221, UP, 418],
    [139, 160, 189, 211, UP, 402], [98, 106, 158, 158, UP, 397], [28, 80, 107, 109, UP, 400],
    [54, 79, 136, 150, DOWN, 397], [133, 135, 179, 204, DOWN, 403], [132, 178, 199, 215, DOWN, 405],
    [123, 200, 202, 242, DOWN, 356], [113, 184, 203, 205, UP, 357], [176, 183, 256, 301, DOWN, 364],
    [219, 237, 257, 290, UP, 384], [171, 191, 236, 241, UP, 394], [55, 92, 191, 213, UP, 393],
    [62, 74, 92, 104, UP, 405], [50, 74, 83, 102, DOWN, 414], [50, 82, 97, 119, DOWN, 436],
    [89, 89, 148, 155, DOWN, 440], [91, 113, 146, 146, UP, 437], [93, 111, 133, 147, DOWN, 434],
    [66, 117, 234, 236, DOWN, 412], [156, 156, 233, 233, UP, 407], [136, 140, 156, 197, UP, 421],
    [141, 141, 195, 201, DOWN, 427], [183, 196, 223, 232, DOWN, 427], [214, 221, 247, 278, DOWN, 422],
    [211, 245, 287, 312, DOWN, 400], [240, 285, 294, 294, DOWN, 420]
];

const bands = [
    '0,26 18,29 35,40 50,55 66,72 81,88 97,109 113,111 129,94 144,78 160,75 207,73 239,77 255,87 270,72 286,52 302,40 380,44 412,43 428,48 444,57 460,57 491,46',
    '0,200 18,208 34,217 50,223 66,229 81,233 97,238 113,238 129,226 144,223 160,218 192,210 207,204 223,203 239,205 255,209 270,204 286,194 302,184 318,174 333,166 349,157 365,153 380,154 407,152 428,156 444,163 460,169 491,179',
    '0,373 18,387 34,393 50,390 66,385 81,380 97,366 129,365 144,366 160,362 176,351 192,345 207,335 223,332 239,335 255,332 270,337 286,334 302,329 318,310 333,288 349,267 365,261 380,264 396,261 412,261 428,264 444,269 460,281 475,296 491,312'
];

const sar = [
    [66, 443], [81, 435], [97, 427], [113, 420], [129, 413], [160, 384], [176, 369], [192, 356],
    [207, 342], [223, 330], [239, 318], [255, 306], [270, 294], [286, 284], [302, 274], [318, 264],
    [333, 255], [349, 245], [365, 237], [381, 28], [396, 32], [412, 36], [428, 40], [444, 44],
    [460, 48], [475, 57], [491, 72]
];

const times = [[35, '11 Apr 2024, UTC+3'], [160, '13:00'], [223, '17:00'], [286, '21:00'], [349, '12 Apr'],
    [412, '05:00'], [475, '09:00'], [538, '13:00'], [600, '17:00']];

function add(tag, attrs, text) {
    const el = document.createElementNS(NS, tag);
    for (const key in attrs) el.setAttribute(key, attrs[key]);
    if (text) el.textContent = text;
    plot.appendChild(el);
    return el;
}

function rect(x, y, width, height, fill) {
    add('rect', { x, y, width, height, fill });
}

function candleX(i) {
    return Math.round(3 + i * STEP);
}

function price(x, y, value, fill) {
    const el = add('text', { x, y }, value.slice(0, -1));
    const last = document.createElementNS(NS, 'tspan');
    last.setAttribute('font-size', 6);
    last.textContent = value.slice(-1);
    el.appendChild(last);
    if (fill) el.style.fill = fill;
}

// grid
for (let i = 2; candleX(i) < PLOT_RIGHT; i += 2) {
    rect(candleX(i), 0, 1, PLOT_BOTTOM, '#222');
    rect(candleX(i), PLOT_BOTTOM, 1, 2, '#777');
}
for (let i = 0; i < 12; i++) {
    const y = Math.round(21 + i * 37.63);
    rect(0, y, PLOT_RIGHT, 1, '#222');
    rect(PLOT_RIGHT, y, 3, 1, '#777');
    // the 111.70 label gives way to the bid and ask tags
    if (i !== 7) price(626, y + 3, (112.05 - i * 0.05).toFixed(3));
}

// volumes
candles.forEach((c, i) => rect(candleX(i), c[5], 1, PLOT_BOTTOM - c[5] + 1, '#5b93b8'));

// axes and crosshair
rect(0, PLOT_BOTTOM, 654, 1, '#4a4a4a');
rect(PLOT_RIGHT, 0, 1, PLOT_BOTTOM, '#777');
rect(candleX(21), 0, 1, PLOT_BOTTOM, '#777');

candles.forEach((c, i) => {
    const x = candleX(i);
    rect(x, c[0], 1, c[3] - c[0], c[4]);
    rect(x - 5, c[1], 10, c[2] - c[1], c[4]);
});

bands.forEach(points => add('polyline', { points, fill: 'none', stroke: '#0d6a2b' }));
sar.forEach(([x, y]) => rect(x - 1, y - 1, 2, 2, '#b23a1c'));

// bid and ask lines
rect(0, 287, PLOT_RIGHT, 1, '#14703a');
rect(0, 293, PLOT_RIGHT, 1, DOWN);
add('path', { d: 'M619 287l5-7h30v14h-30z', fill: '#009345' });
price(626, 289, '111.697', '#fff');
add('path', { d: 'M619 293l5-7h30v14h-30z', fill: DOWN });
price(626, 296, '111.689', '#4a1c0a');

times.forEach(([x, label]) => add('text', { x, y: 457, 'text-anchor': 'middle' }, label));

// bar countdown
add('path', { d: 'M472.500 441.500h16l3-4 3 4h8v12h-30z', fill: '#000', stroke: '#999' });
add('path', { d: 'M475.500 444v8M477.500 444v8', stroke: '#aaa', 'stroke-dasharray': '1 1' });
add('text', { x: 481, y: 450 }, '31:31');

// scale ruler
add('path', { d: 'M612 7.500h3.500v75h-3.500', fill: 'none', stroke: '#aaa' });
add('text', { x: 0, y: 0, transform: 'translate(613 58) rotate(-90)' }, '10.0 pips');
add('text', { x: 7, y: 12 }, 'Parabolic SAR 1');
add('text', { x: 7, y: 23 }, 'Bollinger Bands 1');

// depth of market, [volume, price]
const bids = [[90000, 111.689], [75000, 111.688], [125000, 111.686], [150000, 111.684], [200000, 111.683],
    [250000, 111.682], [300000, 111.680], [500000, 111.677], [1250000, 111.672], [2000000, 111.667],
    [5000000, 111.662], [10000000, 111.652], [50000000, 111.590]];
const asks = [[20000, 111.697], [30000, 111.698], [40000, 111.700], [75000, 111.701], [275000, 111.702],
    [200000, 111.703], [250000, 111.704], [300000, 111.706], [500000, 111.709], [1250000, 111.714],
    [2000000, 111.719], [5000000, 111.724], [10000000, 111.734], [50000000, 111.796]];

function fillDepth(id, rows, priceFirst) {
    document.getElementById(id).innerHTML = rows.map(([volume, value]) => {
        const cells = [String(volume).replace(/\B(?=(\d{3})+$)/g, ' '), value.toFixed(3)];
        if (priceFirst) cells.reverse();
        const bar = `<td class="bar" style="width: ${volume / 500000}%"></td>`;
        return `<tr>${bar}<td>${cells[0]}</td><td>${cells[1]}</td></tr>`;
    }).join('');
}

fillDepth('bids', bids, false);
fillDepth('asks', asks, true);
```
